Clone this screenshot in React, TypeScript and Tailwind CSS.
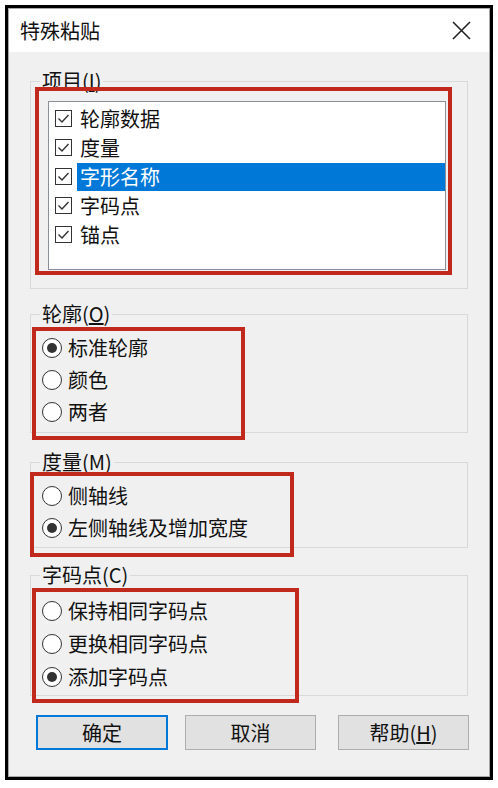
import React from "react";

const FONT = { fontFamily: '"Noto Sans CJK SC", "Noto Sans", sans-serif' };

function CheckBox() {
  return (
    <span className="flex h-[17px] w-[17px] shrink-0 items-center justify-center border border-[#333333] bg-white">
      <svg width="15" height="15" viewBox="0 0 15 15" fill="none">
        <path d="M2.5 7.5 L6 11 L12.5 4" stroke="#333333" strokeWidth="1.4" />
      </svg>
    </span>
  );
}

function Radio({ checked }: { checked?: boolean }) {
  return (
    <span className="flex h-[20px] w-[20px] shrink-0 items-center justify-center rounded-full border border-[#333333] bg-white">
      {checked && <span className="h-[10px] w-[10px] rounded-full bg-[#333333]" />}
    </span>
  );
}

function ListRow({ text, selected }: { text: string; selected?: boolean }) {
  return (
    <div className="flex h-[29px] items-center pl-[6px]">
      <CheckBox />
      <span
        className={
          "ml-[5px] flex h-[28px] flex-1 items-center pl-[3px] text-[20px] leading-[28px] " +
          (selected ? "bg-[#0078d7] text-white" : "text-[#111111]")
        }
      >
        {text}
      </span>
    </div>
  );
}

function RadioRow({ text, checked, h }: { text: string; checked?: boolean; h: string }) {
  return (
    <div className={"flex items-center pl-[11px] " + h}>
      <Radio checked={checked} />
      <span className="ml-[6px] text-[20px] leading-[24px] text-[#111111]">{text}</span>
    </div>
  );
}

export default function App() {
  return (
    <div className="min-h-[788px] w-[498px] bg-white pl-[5px] pt-[5px]" style={FONT}>
      <div className="h-[775px] w-[488px] border-[3px] border-black">
        <div className="flex h-full flex-col border border-[#a8a8a8] bg-[#f0f0f0]">
          {/* title bar */}
          <div className="flex h-[43px] items-center justify-between bg-white pl-[11px] pr-[18px]">
            <span className="text-[20px] leading-[24px] text-[#111111]">特殊粘贴</span>
            <svg width="19" height="19" viewBox="0 0 19 19" fill="none">
              <path d="M1 1 L18 18 M18 1 L1 18" stroke="#222222" strokeWidth="1.6" />
            </svg>
          </div>

          {/* group 1 */}
          <div className="relative ml-[21px] mt-[17px] w-[438px]">
            <fieldset className="border border-[#d9d9d9] px-0 pb-[18px]">
              <legend className="ml-[9px] px-[2px] text-[20px] leading-[24px] text-[#111111]">
                项目(<span className="underline">I</span>)
              </legend>
              <div className="ml-[17px] mt-[8px] h-[169px] w-[398px] border border-[#8a8f99] bg-white pt-[2px]">
                <ListRow text="轮廓数据" />
                <ListRow text="度量" />
                <ListRow text="字形名称" selected />
                <ListRow text="字码点" />
                <ListRow text="锚点" />
              </div>
            </fieldset>
            <div className="pointer-events-none absolute left-[5px] top-[18px] h-[188px] w-[417px] border-4 border-[#c0291c]" />
          </div>

          {/* group 2 */}
          <div className="relative ml-[21px] mt-[13px] w-[438px]">
            <fieldset className="border border-[#d9d9d9] pb-[4px] pt-[6px]">
              <legend className="ml-[9px] px-[2px] text-[20px] leading-[24px] text-[#111111]">
                轮廓(<span className="underline">O</span>)
              </legend>
              <RadioRow text="标准轮廓" checked h="h-[32px]" />
              <RadioRow text="颜色" h="h-[32px]" />
              <RadioRow text="两者" h="h-[32px]" />
            </fieldset>
            <div className="pointer-events-none absolute left-[2px] top-[25px] h-[113px] w-[213px] border-4 border-[#c0291c]" />
          </div>

          {/* group 3 */}
          <div className="relative ml-[21px] mt-[17px] w-[438px]">
            <fieldset className="border border-[#d9d9d9] pb-[3px] pt-[6px]">
              <legend className="ml-[9px] px-[2px] text-[20px] leading-[24px] text-[#111111]">
                度量(M)
              </legend>
              <RadioRow text="侧轴线" h="h-[32px]" />
              <RadioRow text="左侧轴线及增加宽度" checked h="h-[32px]" />
            </fieldset>
            <div className="pointer-events-none absolute left-0 top-[22px] h-[85px] w-[264px] border-4 border-[#c0291c]" />
          </div>

          {/* group 4 */}
          <div className="relative ml-[21px] mt-[15px] w-[438px]">
            <fieldset className="border border-[#d9d9d9] pb-[2px] pt-[7px]">
              <legend className="ml-[9px] px-[2px] text-[20px] leading-[24px] text-[#111111]">
                字码点(C)
              </legend>
              <RadioRow text="保持相同字码点" h="h-[33px]" />
              <RadioRow text="更换相同字码点" h="h-[33px]" />
              <RadioRow text="添加字码点" checked h="h-[33px]" />
            </fieldset>
            <div className="pointer-events-none absolute left-[2px] top-[25px] h-[115px] w-[267px] border-4 border-[#c0291c]" />
          </div>

          {/* buttons */}
          <div className="mt-[19px] flex pl-[27px]">
            <button className="flex h-[35px] w-[132px] items-center justify-center border-2 border-[#0078d7] bg-[#e1e1e1] text-[20px] leading-[24px] text-[#111111]">
              确定
            </button>
            <button className="ml-[17px] flex h-[35px] w-[131px] items-center justify-center border border-[#adadad] bg-[#e1e1e1] text-[20px] leading-[24px] text-[#111111]">
              取消
            </button>
            <button className="ml-[22px] flex h-[35px] w-[131px] items-center justify-center border border-[#adadad] bg-[#e1e1e1] text-[20px] leading-[24px] text-[#111111]">
              帮助(<span className="underline">H</span>)
            </button>
          </div>
        </div>
      </div>
    </div>
  );
}
